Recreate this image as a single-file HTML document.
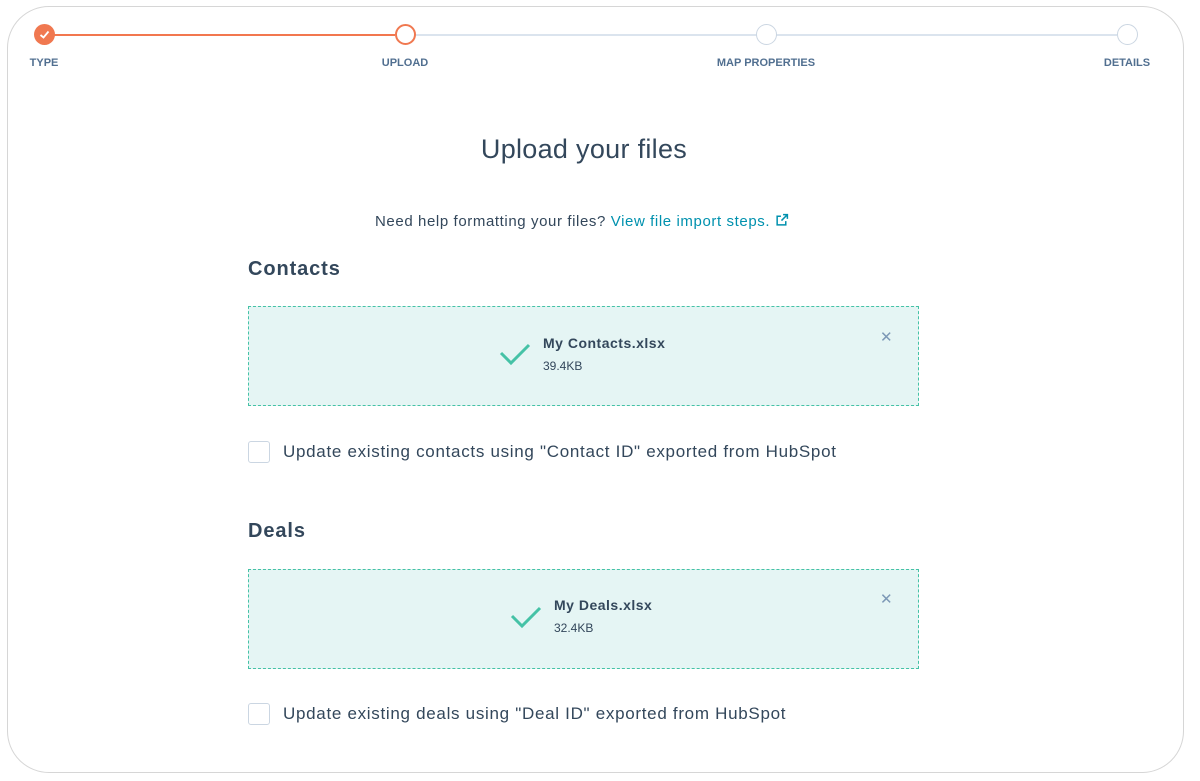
<!DOCTYPE html>
<html><head><meta charset="utf-8"><style>
body{margin:0;width:1200px;height:781px;background:#fff;font-family:"Liberation Sans",sans-serif;position:relative;overflow:hidden;color:#33475b}
.frame{position:absolute;left:7px;top:6px;width:1177px;height:767px;border:1.5px solid #d6d6d6;border-radius:42px;box-sizing:border-box}
.abs{position:absolute}
.line{position:absolute;top:34px;height:1.5px}
.circ{position:absolute;top:24px;width:21px;height:21px;border-radius:50%;box-sizing:border-box;background:#fff}
.lbl{position:absolute;top:57px;font-size:11px;font-weight:bold;color:#516f90;transform:translateX(-50%)}
.box{position:absolute;left:248px;width:671px;height:99px;background:#e5f5f4;border:1px dashed #45c2a6;box-sizing:border-box}
.fname{position:absolute;font-size:14px;font-weight:bold;color:#33475b;letter-spacing:0.5px}
.fsize{position:absolute;font-size:12px;color:#33475b}
.x{position:absolute;font-size:15px;color:#7c98b6}
.cb{position:absolute;left:248px;width:22px;height:22px;border:1.5px solid #cbd6e2;border-radius:3px;box-sizing:border-box;background:#fff}
.cbt{position:absolute;left:283px;font-size:17px;color:#33475b;letter-spacing:0.7px}
h2{position:absolute;margin:0;left:248px;font-size:20px;font-weight:bold;color:#33475b;letter-spacing:0.9px}
</style></head><body>
<div class="frame"></div>
<div class="line" style="left:54px;width:341px;background:#f2774f"></div>
<div class="line" style="left:415px;width:702px;background:#dbe4ee"></div>
<div class="circ" style="left:34px;background:#f07850;border:none"><svg width="21" height="21"><path d="M6.5 11l3 2.5 5-6" stroke="#fff" stroke-width="1.8" fill="none"/></svg></div>
<div class="circ" style="left:395px;border:2px solid #f07850"></div>
<div class="circ" style="left:756px;border:1.5px solid #cbd6e2"></div>
<div class="circ" style="left:1117px;border:1.5px solid #cbd6e2"></div>
<div class="lbl" style="left:44px">TYPE</div>
<div class="lbl" style="left:405px">UPLOAD</div>
<div class="lbl" style="left:766px">MAP PROPERTIES</div>
<div class="lbl" style="left:1127px">DETAILS</div>
<div class="abs" style="left:0;width:1168px;top:134px;text-align:center;font-size:27px;color:#33475b;letter-spacing:0.3px">Upload your files</div>
<div class="abs" style="left:375px;top:213px;font-size:15px;letter-spacing:0.6px;color:#33475b">Need help formatting your files? <span style="color:#0091ae">View file import steps.</span> <svg width="14" height="14" viewBox="0 0 13 13" style="vertical-align:-1px"><path d="M10 7.5v3.5H2V3h3.5M7.5 1.5h4v4M11.5 1.5L6 7" stroke="#0091ae" stroke-width="1.4" fill="none"/></svg></div>
<h2 style="top:258px">Contacts</h2>
<div class="box" style="top:306px;height:100px"></div>
<svg class="abs" style="left:499px;top:342px" width="32" height="26"><path d="M2 11l10 10L30 3" stroke="#45c2a6" stroke-width="3" fill="none"/></svg>
<div class="fname" style="left:543px;top:335px">My Contacts.xlsx</div>
<div class="fsize" style="left:543px;top:359px">39.4KB</div>
<div class="x" style="left:880px;top:328px">✕</div>
<div class="cb" style="top:441px"></div>
<div class="cbt" style="top:442px">Update existing contacts using "Contact ID" exported from HubSpot</div>
<h2 style="top:520px">Deals</h2>
<div class="box" style="top:569px;height:100px"></div>
<svg class="abs" style="left:510px;top:605px" width="32" height="26"><path d="M2 11l10 10L30 3" stroke="#45c2a6" stroke-width="3" fill="none"/></svg>
<div class="fname" style="left:554px;top:597px">My Deals.xlsx</div>
<div class="fsize" style="left:554px;top:621px">32.4KB</div>
<div class="x" style="left:880px;top:590px">✕</div>
<div class="cb" style="top:703px"></div>
<div class="cbt" style="top:704px">Update existing deals using "Deal ID" exported from HubSpot</div>
</body></html>
